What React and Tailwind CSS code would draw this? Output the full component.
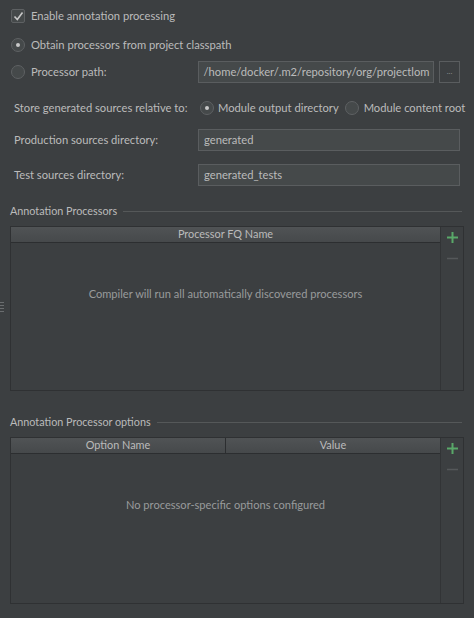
const font = { fontFamily: 'Lato, "Noto Sans", sans-serif' }

function Radio({ checked }) {
  return (
    <span className="flex h-[14px] w-[14px] shrink-0 items-center justify-center rounded-full border border-[#5e6163] bg-[#45494a]">
      {checked && <span className="h-[4px] w-[4px] rounded-full bg-[#c8c8c8]" />}
    </span>
  )
}

function Field({ value, className = '' }) {
  return (
    <div className={`flex h-[22px] items-center overflow-hidden border border-[#5a5d5f] bg-[#45494a] px-[5px] text-[11.2px] text-[#bbbbbb] ${className}`}>
      <span className="whitespace-nowrap">{value}</span>
    </div>
  )
}

function SectionTitle({ children }) {
  return (
    <div className="flex h-[18px] items-center gap-[6px] pl-[10px] pr-[12px] text-[10.8px] text-[#bbbbbb]">
      <span className="whitespace-nowrap">{children}</span>
      <span className="h-px flex-1 bg-[#555859]" />
    </div>
  )
}

function Toolbar() {
  return (
    <div className="flex w-[23px] flex-col items-center border-l border-[#323436] pt-[4px]">
      <svg width="13" height="13" viewBox="0 0 13 13">
        <path d="M6.5 1v11M1 6.5h11" stroke="#59a869" strokeWidth="2" />
      </svg>
      <svg width="13" height="13" viewBox="0 0 13 13" className="mt-[8px]">
        <path d="M1 6.5h11" stroke="#55585a" strokeWidth="1.5" />
      </svg>
    </div>
  )
}

function Table({ columns, empty, height }) {
  return (
    <div className={`mx-[10px] flex border border-[#2f3133] ${height}`}>
      <div className="flex flex-1 flex-col">
        <div className="flex h-[16px] border-b border-[#2c2e30] bg-gradient-to-b from-[#505355] to-[#46494b]">
          {columns.map((col, i) => (
            <div
              key={col}
              className={`flex flex-1 items-center justify-center text-[10.9px] leading-none text-[#bbbbbb] ${i > 0 ? 'border-l border-[#2c2e30]' : ''}`}
            >
              {col}
            </div>
          ))}
        </div>
        <div className="flex flex-1 justify-center pt-[43px] text-[11.1px] text-[#999b9c]">{empty}</div>
      </div>
      <Toolbar />
    </div>
  )
}

export default function App() {
  return (
    <div style={font} className="relative h-[618px] w-[474px] overflow-hidden bg-[#3c3f41] text-[11.2px] text-[#bbbbbb]">
      <div className="flex h-[32px] items-center gap-[6px] pl-[11px]">
        <span className="flex h-[14px] w-[14px] items-center justify-center rounded-[2px] border border-[#5e6163] bg-[#45494a]">
          <svg width="11" height="11" viewBox="0 0 11 11">
            <path d="M1.5 5.5l2.8 3L9.5 1.5" fill="none" stroke="#c8c8c8" strokeWidth="1.6" />
          </svg>
        </span>
        <span>Enable annotation processing</span>
      </div>

      <div className="flex h-[26px] items-center gap-[6px] pl-[11px]">
        <Radio checked />
        <span>Obtain processors from project classpath</span>
      </div>

      <div className="flex h-[28px] items-center pl-[11px] pr-[14px]">
        <div className="flex w-[187px] items-center gap-[6px]">
          <Radio />
          <span>Processor path:</span>
        </div>
        <Field value="/home/docker/.m2/repository/org/projectlom" className="w-[237px]" />
        <div className="ml-[5px] flex h-[22px] w-[21px] items-center justify-center border border-[#5a5d5f] pb-[3px] text-[8px] leading-none text-[#8a8d8f]">
          ...
        </div>
      </div>

      <div className="mt-[8px] flex h-[28px] items-center pl-[14px]">
        <span className="w-[186px] whitespace-nowrap">Store generated sources relative to:</span>
        <Radio checked />
        <span className="ml-[4px] whitespace-nowrap">Module output directory</span>
        <span className="ml-[6px]">
          <Radio />
        </span>
        <span className="ml-[5px] whitespace-nowrap">Module content root</span>
      </div>

      <div className="mt-[4px] flex h-[28px] items-center pl-[14px] pr-[14px]">
        <span className="w-[184px]">Production sources directory:</span>
        <Field value="generated" className="flex-1" />
      </div>

      <div className="mt-[7px] flex h-[28px] items-center pl-[14px] pr-[14px]">
        <span className="w-[184px]">Test sources directory:</span>
        <Field value="generated_tests" className="flex-1" />
      </div>

      <div className="mt-[13px]">
        <SectionTitle>Annotation Processors</SectionTitle>
      </div>
      <div className="mt-[6px]">
        <Table columns={['Processor FQ Name']} empty="Compiler will run all automatically discovered processors" height="h-[165px]" />
      </div>

      <div className="mt-[22px]">
        <SectionTitle>Annotation Processor options</SectionTitle>
      </div>
      <div className="mt-[6px]">
        <Table columns={['Option Name', 'Value']} empty="No processor-specific options configured" height="h-[167px]" />
      </div>

      <div className="absolute left-0 top-[302px] flex flex-col gap-[2px]">
        <span className="h-px w-[4px] bg-[#6a6d6f]" />
        <span className="h-px w-[4px] bg-[#6a6d6f]" />
        <span className="h-px w-[4px] bg-[#6a6d6f]" />
        <span className="h-px w-[4px] bg-[#6a6d6f]" />
      </div>
    </div>
  )
}
